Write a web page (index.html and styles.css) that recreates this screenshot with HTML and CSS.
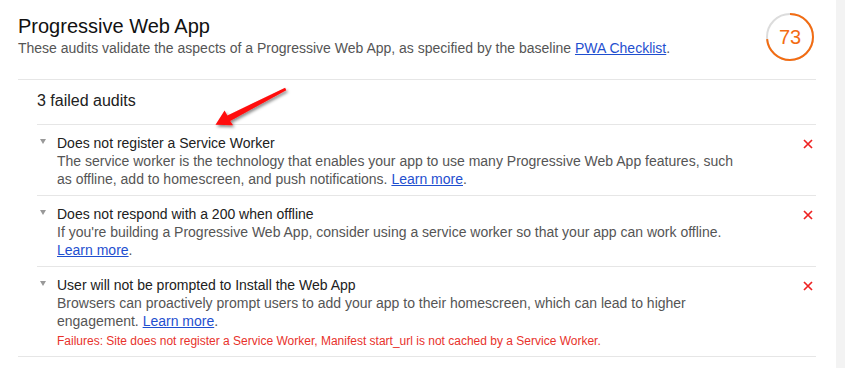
FILE: index.html
```html
<!DOCTYPE html>
<html lang="en">
<head>
<meta charset="utf-8">
<title>Progressive Web App</title>
<link rel="stylesheet" href="styles.css">
</head>
<body>
<div class="page">
  <main class="report">
    <header class="cat-header">
      <div class="cat-text">
        <h1 class="cat-title">Progressive Web App</h1>
        <p class="cat-desc">These audits validate the aspects of a Progressive Web App, as specified by the baseline <a href="#" class="link">PWA Checklist</a>.</p>
      </div>
      <div class="score">
        <svg class="score-ring" width="50" height="50" viewBox="0 0 50 50">
          <circle cx="25" cy="25" r="23" fill="none" stroke="#dcdcdc" stroke-width="2"/>
          <circle cx="25" cy="25" r="23" fill="none" stroke="#f36c12" stroke-width="2" stroke-dasharray="105.5 200" transform="rotate(-90 25 25)"/>
        </svg>
        <span class="score-value">73</span>
      </div>
    </header>

    <section class="group">
      <h2 class="group-title">3 failed audits</h2>

      <div class="audit">
        <span class="toggle"></span>
        <div class="audit-body">
          <div class="audit-title">Does not register a Service Worker</div>
          <div class="audit-desc">The service worker is the technology that enables your app to use many Progressive Web App features, such as offline, add to homescreen, and push notifications. <a href="#" class="link">Learn more</a>.</div>
        </div>
        <svg class="fail-icon" width="10" height="10" viewBox="0 0 10 10"><path d="M1 1L9 9M9 1L1 9" stroke="#ee2222" stroke-width="1.7" fill="none"/></svg>
      </div>

      <div class="audit">
        <span class="toggle"></span>
        <div class="audit-body">
          <div class="audit-title">Does not respond with a 200 when offline</div>
          <div class="audit-desc">If you're building a Progressive Web App, consider using a service worker so that your app can work offline. <a href="#" class="link">Learn more</a>.</div>
        </div>
        <svg class="fail-icon" width="10" height="10" viewBox="0 0 10 10"><path d="M1 1L9 9M9 1L1 9" stroke="#ee2222" stroke-width="1.7" fill="none"/></svg>
      </div>

      <div class="audit">
        <span class="toggle"></span>
        <div class="audit-body">
          <div class="audit-title">User will not be prompted to Install the Web App</div>
          <div class="audit-desc">Browsers can proactively prompt users to add your app to their homescreen, which can lead to higher engagement. <a href="#" class="link">Learn more</a>.</div>
          <div class="audit-failure">Failures: Site does not register a Service Worker, Manifest start_url is not cached by a Service Worker.</div>
        </div>
        <svg class="fail-icon" width="10" height="10" viewBox="0 0 10 10"><path d="M1 1L9 9M9 1L1 9" stroke="#ee2222" stroke-width="1.7" fill="none"/></svg>
      </div>
    </section>
  </main>
  <div class="gutter"></div>
</div>

<svg class="annotation" width="100" height="55" viewBox="0 0 100 55">
  <defs>
    <filter id="arrow-shadow" x="-20%" y="-30%" width="150%" height="170%">
      <feDropShadow dx="1.5" dy="2" stdDeviation="1.4" flood-color="#000" flood-opacity="0.45"/>
    </filter>
  </defs>
  <polygon points="15.5,44.8 33,45.2 30.2,40.9 86.3,10.2 85.1,7.8 27.4,35.5 24.6,30.6" fill="#ff0a0a" filter="url(#arrow-shadow)"/>
</svg>
</body>
</html>
```

FILE: styles.css
```css
html, body {
  margin: 0;
  padding: 0;
}

body {
  position: relative;
  width: 845px;
  height: 368px;
  overflow: hidden;
  background: #ffffff;
  font-family: "Liberation Sans", Arial, Helvetica, sans-serif;
  color: #212121;
}

.page {
  display: flex;
  min-height: 368px;
}

.report {
  width: 836px;
  box-sizing: border-box;
  padding: 0 20px 0 18px;
}

.gutter {
  flex: 1;
  background: #f3f3f3;
}

.cat-header {
  display: flex;
  justify-content: space-between;
  align-items: flex-start;
  padding: 13px 0 22px;
  border-bottom: 1px solid #e6e6e6;
}

.cat-title {
  margin: 0;
  font-size: 20px;
  line-height: 26px;
  font-weight: normal;
  color: #111111;
}

.cat-desc {
  margin: 0;
  font-size: 14px;
  line-height: 18px;
  color: #555555;
}

.link {
  color: #1f4fcf;
  text-decoration: underline;
}

.score {
  position: relative;
  width: 50px;
  height: 50px;
  margin: -1px 1px -12px 0;
  display: flex;
  align-items: center;
  justify-content: center;
}

.score-ring {
  position: absolute;
  left: 0;
  top: 0;
}

.score-value {
  position: relative;
  font-size: 20px;
  line-height: 20px;
  color: #f36c12;
}

.group {
  padding-left: 19px;
  border-bottom: 1px solid #e6e6e6;
}

.group-title {
  margin: 0;
  padding: 11px 0 13px;
  font-size: 16px;
  line-height: 20px;
  font-weight: normal;
  color: #212121;
}

.audit {
  display: grid;
  grid-template-columns: 20px 1fr 13px;
  align-items: start;
  border-top: 1px solid #e6e6e6;
  padding: 9px 0 7px;
}

.toggle {
  width: 0;
  height: 0;
  margin: 5px 0 0 3px;
  border-left: 3.5px solid transparent;
  border-right: 3.5px solid transparent;
  border-top: 5px solid #999999;
}

.audit-body {
  padding-right: 61px;
}

.audit-title {
  font-size: 14px;
  line-height: 18px;
  color: #212121;
}

.audit-desc {
  font-size: 14px;
  line-height: 18px;
  color: #555555;
}

.audit-failure {
  margin-top: 3px;
  font-size: 12px;
  line-height: 16px;
  color: #e8322b;
}

.fail-icon {
  margin-top: 5px;
}

.annotation {
  position: absolute;
  left: 200px;
  top: 80px;
  pointer-events: none;
}
```
